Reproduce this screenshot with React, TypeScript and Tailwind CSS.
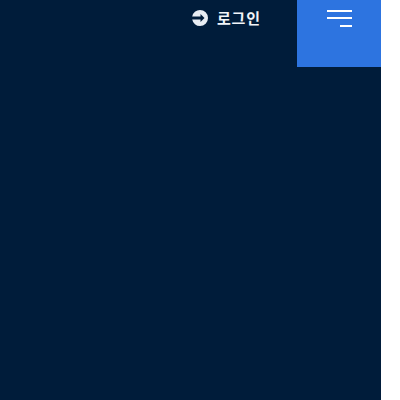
export default function App() {
  return (
    <div className="h-[400px] w-[400px] overflow-hidden bg-white font-['Noto_Sans_CJK_KR','Noto_Sans',sans-serif]">
      <div className="h-full w-[381px] bg-[#001c3a]">
        <header className="flex items-start justify-end">
          <a href="#" className="mr-[36px] flex h-[36px] items-center gap-[9px] text-[15px] font-bold tracking-[0.9px] text-[#f1f5f9]">
            <svg viewBox="0 0 16 16" className="h-[16px] w-[16px]" fill="#e8edf3">
              <path d="M8 0a8 8 0 1 1 0 16A8 8 0 0 1 .2 9.500H8.500V12l4-4-4-4v2.500H.2A8 8 0 0 1 8 0z" />
            </svg>
            <span>로그인</span>
          </a>
          <button type="button" className="flex h-[67px] w-[84px] flex-col items-end gap-[5px] bg-[#2d74e0] pr-[29px] pt-[10px]">
            <span className="h-[2px] w-[25px] bg-white" />
            <span className="h-[2px] w-[25px] bg-white" />
            <span className="mt-[1px] h-[2px] w-[12px] bg-white" />
          </button>
        </header>
      </div>
    </div>
  );
}
